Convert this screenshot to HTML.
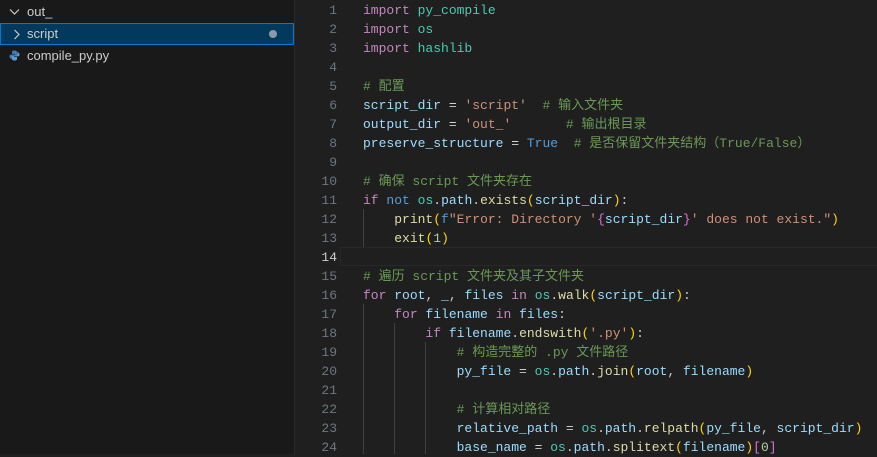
<!DOCTYPE html>
<html><head><meta charset="utf-8"><style>
body{margin:0;width:877px;height:454px;overflow:hidden;background:#1f1f1f;font-family:"Liberation Sans","Noto Sans CJK SC",sans-serif;position:relative}
#side{position:absolute;left:0;top:0;width:294px;height:454px;background:#191919;border-right:1px solid #2b2b2b}
.row{position:absolute;left:0;width:294px;height:22px;line-height:22px;font-size:13px;color:#cccccc;box-sizing:border-box}
.sel{background:#04395e;border:1px solid #0078d4;line-height:20px}
#ed{position:absolute;left:295px;top:0;right:0;height:454px;background:#1f1f1f}
.ln{position:absolute;left:295px;width:42px;text-align:right;font:13px "Liberation Mono",monospace;color:#6e7681;height:19px;line-height:19px}
.cl{position:absolute;left:363px;font:13px "Liberation Mono","Noto Sans CJK SC",monospace;white-space:pre;height:19px;line-height:19px;color:#cccccc}
.k{color:#c586c0}.m{color:#4ec9b0}.v{color:#9cdcfe}.s{color:#ce9178}.c{color:#6a9955}.b{color:#569cd6}.f{color:#dcdcaa}.p{color:#ffd700}.q{color:#da70d6}.n{color:#b5cea8}.w{color:#d4d4d4}
.g{position:absolute;width:1px;background:#404040}
</style></head><body>
<div id="side">
<div class="row" style="top:1px"><svg style="position:absolute;left:9px;top:7px" width="11" height="8"><path d="M1 1.5 L5.5 6 L10 1.5" stroke="#ccc" fill="none" stroke-width="1.2"/></svg><span style="position:absolute;left:27px">out_</span></div>
<div class="row sel" style="top:23px"><svg style="position:absolute;left:12px;top:5px" width="8" height="11"><path d="M1.5 1 L6 5.5 L1.5 10" stroke="#ccc" fill="none" stroke-width="1.2"/></svg><span style="position:absolute;left:26px">script</span><span style="position:absolute;left:268px;top:6px;width:8px;height:8px;border-radius:50%;background:#8a9aa8"></span></div>
<div class="row" style="top:45px"><svg style="position:absolute;left:9px;top:5px" width="11" height="11"><path d="M5.5 0.5 C3 0.5 3 1.5 3 2.5 V4 H6 V4.6 H2 C0.5 4.6 0.5 6 0.5 6.5 C0.5 8 1.2 8.6 2 8.6 H3 V7 C3 6 4 5.5 4.5 5.5 H7 C8 5.5 8.3 5 8.3 4 V2.5 C8.3 1.5 7.5 0.5 5.5 0.5Z" fill="#3d7ab8"/><path d="M5.5 10.5 C8 10.5 8 9.5 8 8.5 V7 H5 V6.4 H9 C10.5 6.4 10.5 5 10.5 4.5 C10.5 3 9.8 2.4 9 2.4 H8.5 V4 C8.5 5 7.5 5.6 7 5.6 H4.2 C3.2 5.6 2.8 6 2.8 7 V8.5 C2.8 9.5 3.5 10.5 5.5 10.5Z" fill="#5a9bd5"/></svg><span style="position:absolute;left:27px">compile_py.py</span></div>
</div>
<div id="ed"></div>
<div style="position:absolute;left:340px;top:247px;width:537px;height:17px;border:1px solid #282828;border-right:none"></div>
<div class="g" style="left:363px;top:209px;height:38px"></div>
<div class="g" style="left:363px;top:304px;height:150px"></div>
<div class="g" style="left:394px;top:323px;height:131px"></div>
<div class="g" style="left:425px;top:342px;height:112px"></div>

<div class="ln" style="top:1px">1</div><div class="cl" style="top:1px"><span class="k">import</span> <span class="m">py_compile</span></div>
<div class="ln" style="top:20px">2</div><div class="cl" style="top:20px"><span class="k">import</span> <span class="m">os</span></div>
<div class="ln" style="top:39px">3</div><div class="cl" style="top:39px"><span class="k">import</span> <span class="m">hashlib</span></div>
<div class="ln" style="top:58px">4</div>
<div class="ln" style="top:77px">5</div><div class="cl c" style="top:77px"># 配置</div>
<div class="ln" style="top:96px">6</div><div class="cl" style="top:96px"><span class="v">script_dir</span> <span class="w">=</span> <span class="s">'script'</span>  <span class="c"># 输入文件夹</span></div>
<div class="ln" style="top:115px">7</div><div class="cl" style="top:115px"><span class="v">output_dir</span> <span class="w">=</span> <span class="s">'out_'</span>       <span class="c"># 输出根目录</span></div>
<div class="ln" style="top:134px">8</div><div class="cl" style="top:134px"><span class="v">preserve_structure</span> <span class="w">=</span> <span class="b">True</span>  <span class="c"># 是否保留文件夹结构（True/False）</span></div>
<div class="ln" style="top:153px">9</div>
<div class="ln" style="top:172px">10</div><div class="cl c" style="top:172px"># 确保 script 文件夹存在</div>
<div class="ln" style="top:191px">11</div><div class="cl" style="top:191px"><span class="k">if</span> <span class="b">not</span> <span class="m">os</span>.<span class="v">path</span>.<span class="f">exists</span><span class="p">(</span><span class="v">script_dir</span><span class="p">)</span>:</div>
<div class="ln" style="top:210px">12</div><div class="cl" style="top:210px">    <span class="f">print</span><span class="p">(</span><span class="b">f</span><span class="s">"Error: Directory '</span><span class="q">{</span><span class="v">script_dir</span><span class="q">}</span><span class="s">' does not exist."</span><span class="p">)</span></div>
<div class="ln" style="top:229px">13</div><div class="cl" style="top:229px">    <span class="f">exit</span><span class="p">(</span><span class="n">1</span><span class="p">)</span></div>
<div class="ln" style="top:248px;color:#cccccc">14</div>
<div class="ln" style="top:267px">15</div><div class="cl c" style="top:267px"># 遍历 script 文件夹及其子文件夹</div>
<div class="ln" style="top:286px">16</div><div class="cl" style="top:286px"><span class="k">for</span> <span class="v">root</span>, <span class="v">_</span>, <span class="v">files</span> <span class="k">in</span> <span class="m">os</span>.<span class="f">walk</span><span class="p">(</span><span class="v">script_dir</span><span class="p">)</span>:</div>
<div class="ln" style="top:305px">17</div><div class="cl" style="top:305px">    <span class="k">for</span> <span class="v">filename</span> <span class="k">in</span> <span class="v">files</span>:</div>
<div class="ln" style="top:324px">18</div><div class="cl" style="top:324px">        <span class="k">if</span> <span class="v">filename</span>.<span class="f">endswith</span><span class="p">(</span><span class="s">'.py'</span><span class="p">)</span>:</div>
<div class="ln" style="top:343px">19</div><div class="cl c" style="top:343px">            # 构造完整的 .py 文件路径</div>
<div class="ln" style="top:362px">20</div><div class="cl" style="top:362px">            <span class="v">py_file</span> = <span class="m">os</span>.<span class="v">path</span>.<span class="f">join</span><span class="p">(</span><span class="v">root</span>, <span class="v">filename</span><span class="p">)</span></div>
<div class="ln" style="top:381px">21</div>
<div class="ln" style="top:400px">22</div><div class="cl c" style="top:400px">            # 计算相对路径</div>
<div class="ln" style="top:419px">23</div><div class="cl" style="top:419px">            <span class="v">relative_path</span> = <span class="m">os</span>.<span class="v">path</span>.<span class="f">relpath</span><span class="p">(</span><span class="v">py_file</span>, <span class="v">script_dir</span><span class="p">)</span></div>
<div class="ln" style="top:438px">24</div><div class="cl" style="top:438px">            <span class="v">base_name</span> = <span class="m">os</span>.<span class="v">path</span>.<span class="f">splitext</span><span class="p">(</span><span class="v">filename</span><span class="p">)</span><span class="q">[</span><span class="n">0</span><span class="q">]</span></div>
</body></html>
